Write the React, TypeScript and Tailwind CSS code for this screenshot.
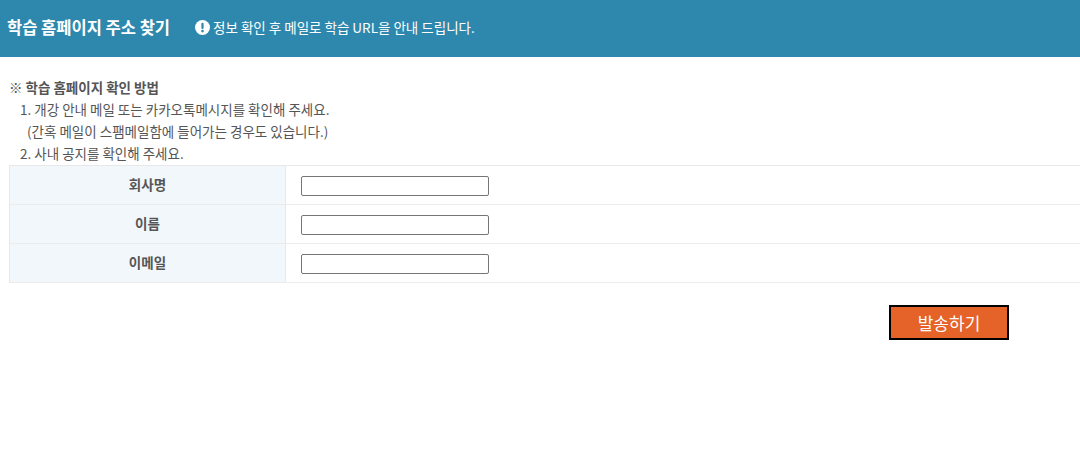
const font = "font-['Malgun_Gothic','Noto_Sans_CJK_KR',sans-serif]";

const fields = ['회사명', '이름', '이메일'];

export default function App() {
  return (
    <div className={`min-h-[467px] overflow-hidden bg-white text-[13.5px] text-[#555] ${font}`}>
      <div className="flex h-[57px] items-center bg-[#2e88ad] pb-0.5 pl-[7px] text-white">
        <h1 className="text-[16.5px] font-bold">학습 홈페이지 주소 찾기</h1>
        <svg className="ml-[25px] mr-[3px] h-[15px] w-[15px]" viewBox="0 0 16 16">
          <circle cx="8" cy="8" r="8" fill="#fff" />
          <rect x="6.8" y="3" width="2.4" height="6.6" rx="1" fill="#2e88ad" />
          <circle cx="8" cy="11.8" r="1.4" fill="#2e88ad" />
        </svg>
        <p>정보 확인 후 메일로 학습 URL을 안내 드립니다.</p>
      </div>

      <div className="pb-px pl-[9px] pt-[19px] leading-[22px]">
        <p>
          ※ <b className="font-semibold">학습 홈페이지 확인 방법</b>
        </p>
        <p className="pl-[11px]">1. 개강 안내 메일 또는 카카오톡메시지를 확인해 주세요.</p>
        <p className="pl-[18px]">(간혹 메일이 스팸메일함에 들어가는 경우도 있습니다.)</p>
        <p className="pl-[11px]">2. 사내 공지를 확인해 주세요.</p>
      </div>

      <div className="ml-[9px] border-t border-l border-[#e8e8e8]">
        {fields.map((label) => (
          <div key={label} className="flex h-[39px] border-b border-[#ececec]">
            <div className="flex w-[276px] items-center justify-center border-r border-[#e8e8e8] bg-[#f2f7fb] pb-0.5 font-semibold">
              {label}
            </div>
            <div className="flex items-center pl-[15px] pt-0.5">
              <input
                type="text"
                className="h-5 w-[188px] rounded-[2px] border border-[#767676] bg-white"
              />
            </div>
          </div>
        ))}
      </div>

      <div className="mt-[22px] flex justify-end pr-[71px]">
        <button className="h-[35px] w-[120px] border-2 border-black bg-[#e56228] text-[17px] text-white">
          발송하기
        </button>
      </div>
    </div>
  );
}
